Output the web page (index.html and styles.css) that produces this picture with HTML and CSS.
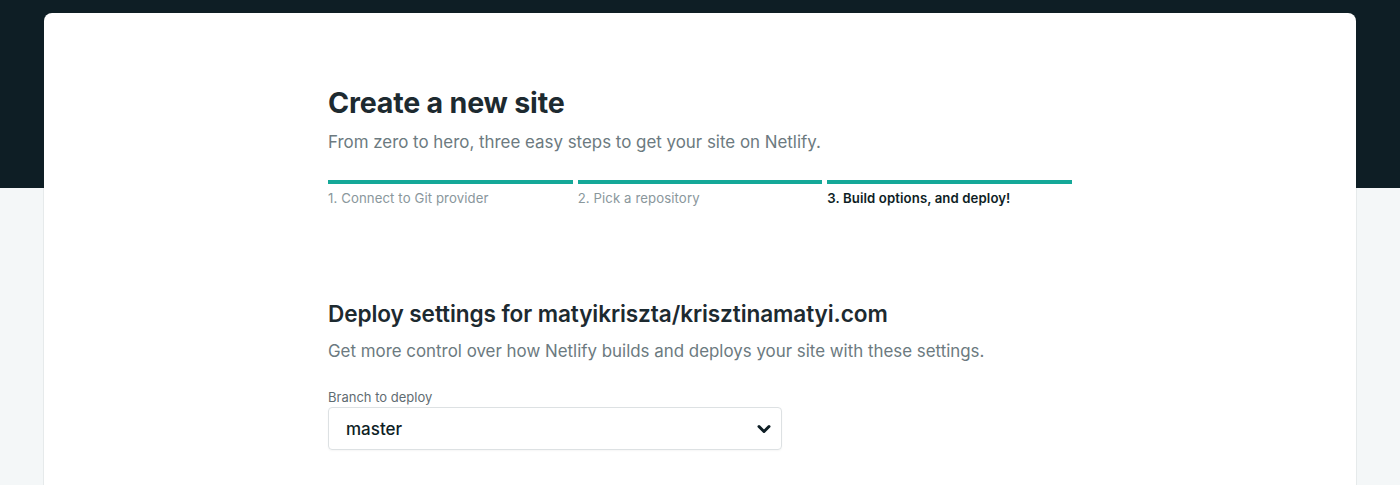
FILE: index.html
```html
<!DOCTYPE html>
<html lang="en">
<head>
<meta charset="utf-8">
<title>Create a new site</title>
<link rel="stylesheet" href="styles.css">
</head>
<body>
<div class="page">
  <div class="hero-bg"></div>
  <main class="card">
    <div class="content">
      <header class="intro">
        <h1 class="title">Create a new site</h1>
        <p class="lead">From zero to hero, three easy steps to get your site on Netlify.</p>
      </header>
      <ol class="steps">
        <li class="step done">1. Connect to Git provider</li>
        <li class="step done">2. Pick a repository</li>
        <li class="step current">3. Build options, and deploy!</li>
      </ol>
      <section class="deploy">
        <h2 class="deploy-title">Deploy settings for matyikriszta/krisztinamatyi.com</h2>
        <p class="lead">Get more control over how Netlify builds and deploys your site with these settings.</p>
        <label class="field-label">Branch to deploy</label>
        <div class="select">
          <span class="select-value">master</span>
          <svg class="chevron" width="14" height="10" viewBox="0 0 14 10"><path d="M2 2.5 L7 7.5 L12 2.5" fill="none" stroke="#0e1e25" stroke-width="3" stroke-linecap="round" stroke-linejoin="round"/></svg>
        </div>
      </section>
    </div>
  </main>
</div>
</body>
</html>
```

FILE: styles.css
```css
* { box-sizing: border-box; }
html, body {
  margin: 0;
  padding: 0;
}
body {
  background: #f4f7f8;
  font-family: Inter, "Noto Sans", "Liberation Sans", sans-serif;
  color: #0e1e25;
  overflow: hidden;
}
.page {
  position: relative;
  padding: 13px 44px 0;
  height: 485px;
  overflow: hidden;
}
.hero-bg {
  position: absolute;
  top: 0; left: 0; right: 0;
  height: 188px;
  background: #0e1e25;
  z-index: 0;
}
.card {
  position: relative;
  z-index: 1;
  background: #fff;
  border-radius: 8px 8px 0 0;
  height: 472px;
  box-shadow: 0 0 0 1px rgba(14,30,37,0.06);
}
.content {
  width: 744px;
  margin: 0 auto;
  padding-top: 72px;
}
.title {
  margin: 0;
  font-size: 28.6px;
  font-weight: 700;
  line-height: 36px;
  letter-spacing: -0.2px;
  color: #1d2a30;
}
.lead {
  margin: 8px 0 0;
  font-size: 16.9px;
  line-height: 26px;
  color: #6c7a80;
}
.steps {
  list-style: none;
  margin: 25px 0 0;
  padding: 0;
  display: grid;
  grid-template-columns: repeat(3, 1fr);
  gap: 5px;
}
.step {
  border-top: 4px solid #15a898;
  padding-top: 5px;
  font-size: 13.2px;
  line-height: 18px;
  letter-spacing: 0.1px;
  color: #8a979c;
}
.step.current {
  color: #0e1e25;
  font-weight: 600;
}
.deploy {
  margin-top: 92px;
}
.deploy-title {
  margin: 0;
  font-size: 22.6px;
  font-weight: 600;
  line-height: 30px;
  letter-spacing: -0.1px;
  color: #1d2a30;
}
.deploy .lead {
  margin-top: 9px;
}
.field-label {
  display: block;
  margin-top: 24px;
  font-size: 13px;
  line-height: 18px;
  color: #5f6c72;
}
.select {
  margin-top: 1px;
  width: 454px;
  height: 43px;
  border: 1px solid #dde1e3;
  border-radius: 4px;
  display: flex;
  align-items: center;
  justify-content: space-between;
  padding: 0 10px 0 17px;
  box-shadow: 0 1px 2px rgba(14,30,37,0.04);
}
.select-value {
  font-size: 17px;
  font-weight: 500;
  color: #0e1e25;
}
.chevron { display: block; }
```
